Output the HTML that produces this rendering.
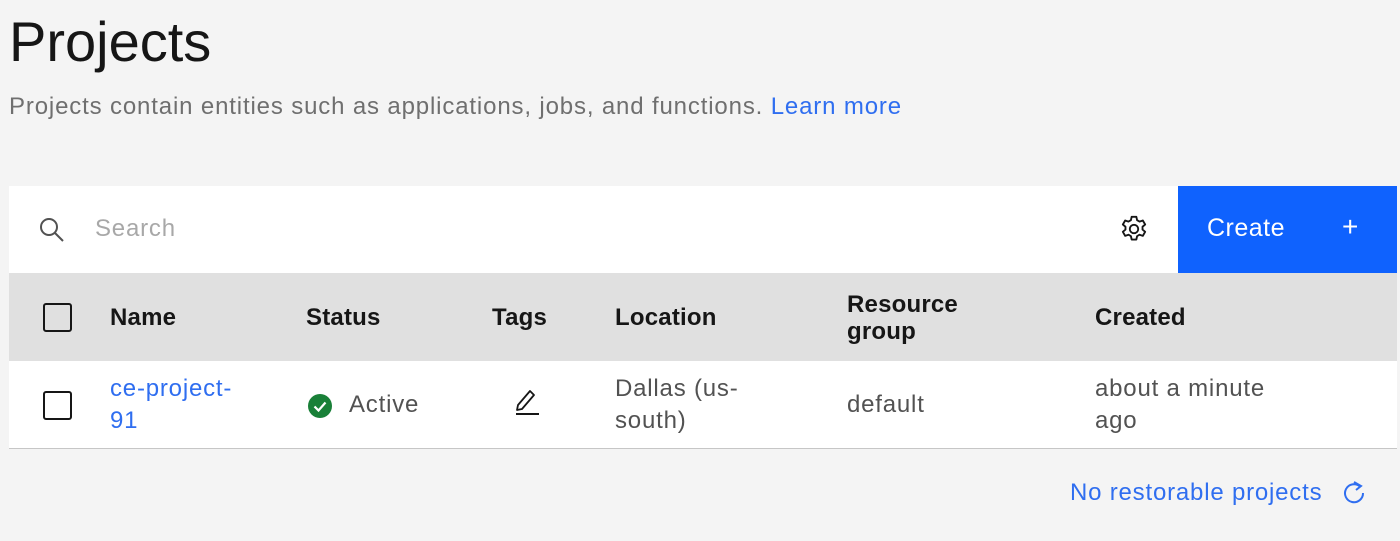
<!DOCTYPE html>
<html><head><style>
*{margin:0;padding:0;box-sizing:border-box}
body{width:1400px;height:541px;background:#f4f4f4;font-family:"Liberation Sans",sans-serif;color:#161616;position:relative;overflow:hidden}
.a{position:absolute;white-space:nowrap}
h1{position:absolute;left:9px;top:9px;font-size:56px;font-weight:300;letter-spacing:0px;color:#161616}
.sub{left:9px;top:93px;font-size:24px;letter-spacing:0.85px;color:#6f6f6f}
.sub span{color:#2f6ef0}
.bar{left:9px;top:186px;width:1388px;height:87px;background:#fff}
.hdr{left:9px;top:273px;width:1388px;height:88px;background:#e0e0e0}
.row{left:9px;top:361px;width:1388px;height:88px;background:#fff;border-bottom:1px solid #c6c6c6}
.cb{width:29px;height:29px;border:2px solid #161616;border-radius:3px;background:transparent}
.h{font-size:24px;font-weight:bold;color:#161616;letter-spacing:0.2px}
.t{font-size:24px;letter-spacing:0.8px;color:#525252;line-height:32px}
.create{left:1178px;top:186px;width:219px;height:87px;background:#0f62fe;color:#fff;font-size:25px;letter-spacing:0.5px}
</style></head><body>
<h1>Projects</h1>
<div class="a sub">Projects contain entities such as applications, jobs, and functions. <span>Learn more</span></div>
<div class="a bar"></div>
<svg class="a" style="left:38px;top:216px" width="28" height="28" viewBox="0 0 28 28"><circle cx="11" cy="11" r="8" fill="none" stroke="#525252" stroke-width="2"/><line x1="17" y1="17" x2="25" y2="25" stroke="#525252" stroke-width="2"/></svg>
<div class="a" style="left:95px;top:215px;font-size:24px;letter-spacing:0.8px;color:#a8a8a8">Search</div>
<svg class="a" style="left:1119px;top:214px" width="30" height="30" viewBox="0 0 32 32"><path d="M13.5 3h5l.8 3.6 2.6 1.5 3.5-1.2 2.5 4.3-2.8 2.4v3l2.8 2.4-2.5 4.3-3.5-1.2-2.6 1.5-.8 3.6h-5l-.8-3.6-2.6-1.5-3.5 1.2-2.5-4.3 2.8-2.4v-3L4.1 11.2l2.5-4.3 3.5 1.2 2.6-1.5z" fill="none" stroke="#161616" stroke-width="2" stroke-linejoin="round"/><circle cx="16" cy="16" r="4.5" fill="none" stroke="#161616" stroke-width="2"/></svg>
<div class="a create"><span style="position:absolute;left:29px;top:28px">Create</span><span style="position:absolute;left:164px;top:25px;font-size:28px;font-weight:300">+</span></div>
<div class="a hdr"></div>
<div class="a cb" style="left:43px;top:303px"></div>
<div class="a h" style="left:110px;top:304px">Name</div>
<div class="a h" style="left:306px;top:304px">Status</div>
<div class="a h" style="left:492px;top:304px">Tags</div>
<div class="a h" style="left:615px;top:304px">Location</div>
<div class="a h" style="left:847px;top:291px;line-height:27px">Resource<br>group</div>
<div class="a h" style="left:1095px;top:304px">Created</div>
<div class="a row"></div>
<div class="a cb" style="left:43px;top:391px"></div>
<div class="a t" style="left:110px;top:373px;color:#2f6ef0">ce-project-<br>91</div>
<svg class="a" style="left:307px;top:393px" width="26" height="26"><circle cx="13" cy="13" r="12" fill="#198038"/><path d="M7.5 13.5l4 4 7-8" fill="none" stroke="#fff" stroke-width="2.2"/></svg>
<div class="a t" style="left:349px;top:389px">Active</div>
<svg class="a" style="left:513px;top:387px" width="28" height="30" viewBox="0 0 28 30"><path d="M5 18L17 4l4 4L9 22l-5 1z" fill="none" stroke="#161616" stroke-width="1.8" stroke-linejoin="round"/><line x1="3" y1="27" x2="26" y2="27" stroke="#161616" stroke-width="2"/></svg>
<div class="a t" style="left:615px;top:373px">Dallas (us-<br>south)</div>
<div class="a t" style="left:847px;top:389px">default</div>
<div class="a t" style="left:1095px;top:373px">about a minute<br>ago</div>
<div class="a" style="left:1070px;top:479px;font-size:24px;letter-spacing:0.8px;color:#2f6ef0">No restorable projects</div>
<svg class="a" style="left:1340px;top:479px" width="28" height="28" viewBox="0 0 28 28"><path d="M20 7.5A9 9 0 1 0 23 14" fill="none" stroke="#2f6ef0" stroke-width="2"/><path d="M14 3l7 4-5 4" fill="none" stroke="#2f6ef0" stroke-width="2"/></svg>
</body></html>
